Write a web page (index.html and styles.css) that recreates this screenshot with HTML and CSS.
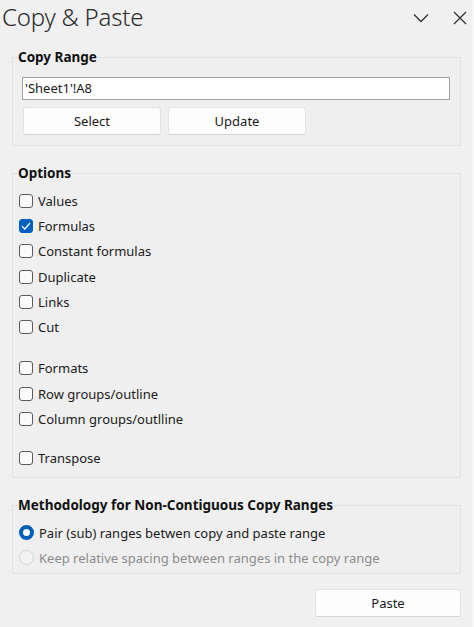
FILE: index.html
```html
<!DOCTYPE html>
<html lang="en">
<head>
<meta charset="utf-8">
<title>Copy &amp; Paste</title>
<link rel="stylesheet" href="styles.css">
</head>
<body>
<div class="pane">
  <header class="titlebar">
    <h1 class="title">Copy &amp; Paste</h1>
    <div class="tools">
      <svg class="tool" width="16" height="10" viewBox="0 0 16 10"><path d="M1 1.5 L8 8.5 L15 1.5" fill="none" stroke="#333" stroke-width="1.3"/></svg>
      <svg class="tool" width="14" height="14" viewBox="0 0 14 14"><path d="M1 1 L13 13 M13 1 L1 13" fill="none" stroke="#333" stroke-width="1.3"/></svg>
    </div>
  </header>

  <fieldset class="group group-range">
    <legend>Copy Range</legend>
    <div class="range-body">
      <div class="textbox">'Sheet1'!A8</div>
      <div class="btn-row">
        <button class="btn">Select</button>
        <button class="btn">Update</button>
      </div>
    </div>
  </fieldset>

  <fieldset class="group group-options">
    <legend>Options</legend>
    <div class="opt"><span class="box"></span><span>Values</span></div>
    <div class="opt"><span class="box checked"><svg width="10" height="8" viewBox="0 0 10 8"><path d="M1 4.2 L3.8 7 L9 1" fill="none" stroke="#fff" stroke-width="1.2"/></svg></span><span>Formulas</span></div>
    <div class="opt"><span class="box"></span><span>Constant formulas</span></div>
    <div class="opt"><span class="box"></span><span>Duplicate</span></div>
    <div class="opt"><span class="box"></span><span>Links</span></div>
    <div class="opt"><span class="box"></span><span>Cut</span></div>
    <div class="spacer-a"></div>
    <div class="opt"><span class="box"></span><span>Formats</span></div>
    <div class="opt"><span class="box"></span><span>Row groups/outline</span></div>
    <div class="opt"><span class="box"></span><span>Column groups/outlline</span></div>
    <div class="spacer-b"></div>
    <div class="opt"><span class="box"></span><span>Transpose</span></div>
  </fieldset>

  <fieldset class="group group-method">
    <legend>Methodology for Non-Contiguous Copy Ranges</legend>
    <div class="opt"><span class="radio on"></span><span>Pair (sub) ranges betwen copy and paste range</span></div>
    <div class="opt disabled"><span class="radio off"></span><span>Keep relative spacing between ranges in the copy range</span></div>
  </fieldset>

  <div class="footer">
    <button class="btn btn-paste">Paste</button>
  </div>
</div>
</body>
</html>
```

FILE: styles.css
```css
html, body {
  margin: 0;
  padding: 0;
  background: #f0f0f0;
}
body {
  font-family: "Noto Sans", "Open Sans", sans-serif;
  font-size: 13px;
  color: #1b1b1b;
  width: 474px;
  height: 627px;
  overflow: hidden;
}
.pane {
  width: 474px;
  height: 627px;
  box-sizing: border-box;
  border-right: 2px solid #f6f6f6;
}
.titlebar {
  display: flex;
  align-items: center;
  justify-content: space-between;
  height: 33px;
  padding: 0 5px 0 2px;
  margin-bottom: 14px;
}
.title {
  margin: 0;
  font-weight: 300;
  font-size: 24px;
  letter-spacing: -0.2px;
  color: #2a2a2a;
  line-height: 32px;
}
.tools {
  display: flex;
  align-items: center;
  gap: 24px;
  padding-top: 2px;
}
.group {
  margin: 0 11px 0 12px;
  border: 1px solid #e1e1e1;
  padding: 0 6px;
  min-width: 0;
  background: #efefef;
}
.group legend {
  font-weight: 700;
  font-size: 13.5px;
  padding: 0;
  margin-left: -1px;
  line-height: 21px;
  color: #111;
}
.group-range {
  padding-top: 9px;
  padding-bottom: 10px;
}
.range-body {
  padding: 0 4px 0 3px;
}
.textbox {
  height: 23px;
  box-sizing: border-box;
  border: 1.5px solid #a2a2a2;
  background: #fff;
  line-height: 20px;
  padding-left: 2px;
  color: #1b1b1b;
}
.btn-row {
  display: flex;
  gap: 7px;
  margin-top: 7px;
  padding-left: 1px;
}
.btn {
  font-family: inherit;
  font-size: 13px;
  color: #1b1b1b;
  background: #fdfdfd;
  border: 1px solid #e3e3e3;
  border-bottom-color: #d3d3d3;
  border-radius: 3px;
  height: 28px;
  width: 138px;
  padding: 0;
}
.group-options {
  margin-top: 17px;
  padding-top: 4px;
  padding-bottom: 6px;
}
.opt {
  display: flex;
  align-items: center;
  gap: 5px;
  height: 25.3px;
  white-space: nowrap;
}
.spacer-a { height: 16px; }
.spacer-b { height: 14px; }
.box {
  width: 14px;
  height: 14px;
  box-sizing: border-box;
  border: 1px solid #5c5c5c;
  border-radius: 3px;
  background: #fafafa;
  display: flex;
  align-items: center;
  justify-content: center;
  flex: none;
}
.box.checked {
  background: #0062c0;
  border-color: #0062c0;
}
.group-method {
  margin-top: 17px;
  padding-top: 4px;
  padding-bottom: 2px;
}
.radio {
  width: 15px;
  height: 15px;
  box-sizing: border-box;
  border-radius: 50%;
  flex: none;
}
.radio.on {
  background: #fff;
  border: 4.5px solid #005fb8;
}
.radio.off {
  background: #f3f3f3;
  border: 1px solid #d2d2d2;
}
.disabled {
  color: #8c8c8c;
}
.footer {
  display: flex;
  justify-content: flex-end;
  margin-top: 15px;
  padding-right: 11px;
}
.btn-paste {
  width: 146px;
}
```
